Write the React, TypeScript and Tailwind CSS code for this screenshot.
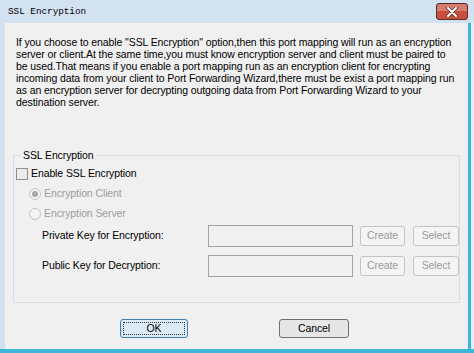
import React from "react";

const F = { fontFamily: '"Liberation Sans", Arial, sans-serif' };

function Radio({ checked, label }: { checked?: boolean; label: string }) {
  return (
    <div className="flex h-[20px] items-center pl-[13px]">
      <span className="flex h-[12px] w-[12px] items-center justify-center rounded-full border border-[#c4c4c4] bg-[#f4f4f4]">
        {checked && <span className="h-[6px] w-[6px] rounded-full bg-[#a8a8a8]" />}
      </span>
      <span className="ml-[3px] text-[#9d9d9d]">{label}</span>
    </div>
  );
}

function KeyRow({ label, className }: { label: string; className?: string }) {
  return (
    <div className={"flex h-[22px] items-center " + (className || "")}>
      <span className="w-[192px] pl-[26px] text-black">{label}</span>
      <div className="h-[22px] w-[145px] border border-[#a3a3a3] bg-[#f0f0f0]" />
      <button className="ml-[7px] h-[20px] w-[45px] rounded-[3px] border border-[#c2c5c7] bg-[#f4f4f4] text-[#9a9a9a]">
        Create
      </button>
      <button className="ml-[8px] h-[20px] w-[46px] rounded-[3px] border border-[#c2c5c7] bg-[#f4f4f4] text-[#9a9a9a]">
        Select
      </button>
    </div>
  );
}

export default function App() {
  return (
    <div className="flex h-[353px] w-[474px] flex-col bg-[#d4e2f0] text-[10.5px] tracking-[-0.1px]" style={F}>
      <div className="flex h-[23px] shrink-0 items-center bg-[#d3e2f1] pl-[8px] pr-[6px]">
        <span className="text-[9.3px] tracking-normal text-black" style={{ fontFamily: '"Liberation Mono", monospace' }}>
          SSL Encryption
        </span>
        <div className="flex-1" />
        <div className="flex h-[17px] w-[32px] items-center justify-center rounded-[3px] border border-[#5a2a26] bg-[#c9503f] shadow-[inset_0_7px_0_rgba(255,255,255,0.25)]">
          <svg width="12" height="10" viewBox="0 0 12 10">
            <path d="M2 1 L10 9 M10 1 L2 9" stroke="#5a2a26" strokeWidth="3.4" strokeLinecap="round" />
            <path d="M2 1 L10 9 M10 1 L2 9" stroke="#ffffff" strokeWidth="2" strokeLinecap="round" />
          </svg>
        </div>
      </div>
      <div className="flex min-h-0 flex-1">
        <div className="w-[5px] shrink-0 bg-[#d4e2f0]" />
        <div className="flex flex-1 flex-col bg-[#f0f0f0] pl-[11px] pt-[13px]">
          <p className="whitespace-nowrap leading-[12px] text-black">
            If you choose to enable "SSL Encryption" option,then this port mapping will run as an encryption
            <br />
            server or client.At the same time,you must know encryption server and client must be paired to
            <br />
            be used.That means if you enable a port mapping run as an encryption client for encrypting
            <br />
            incoming data from your client to Port Forwarding Wizard,there must be exist a port mapping run
            <br />
            as an encryption server for decrypting outgoing data from Port Forwarding Wizard to your
            <br />
            destination server.
          </p>
          <fieldset className="ml-[-3px] mt-[41px] h-[154px] w-[447px] shrink-0 border border-[#d5dfe5] pl-[2px] pt-[3px]">
            <legend className="ml-[5px] px-[2px] leading-[12px] text-black">SSL Encryption</legend>
            <div className="flex h-[20px] items-center">
              <span className="h-[12px] w-[12px] border border-[#8f8f8f] bg-[#ececec]" />
              <span className="ml-[3px] text-black">Enable SSL Encryption</span>
            </div>
            <Radio checked label="Encryption Client" />
            <Radio label="Encryption Server" />
            <KeyRow label="Private Key for Encryption:" className="mt-[1px]" />
            <KeyRow label="Public Key for Decryption:" className="mt-[8px]" />
          </fieldset>
          <div className="mt-[16px] flex shrink-0">
            <button className="ml-[104px] flex h-[19px] w-[68px] items-center justify-center rounded-[3px] border border-[#3c7fb1] bg-[#dcecf6] p-[2px] text-black">
              <span className="flex h-full w-full items-center justify-center border border-dotted border-[#333]">OK</span>
            </button>
            <button className="ml-[91px] h-[19px] w-[70px] rounded-[3px] border border-[#707070] bg-[#e6e6e6] text-black">
              Cancel
            </button>
          </div>
          <div className="flex-1" />
        </div>
        <div className="w-[2px] shrink-0 bg-[#e8eef4]" />
        <div className="w-[3px] shrink-0 bg-[#3eb6d8]" />
        <div className="w-[3px] shrink-0 bg-[#e9eef3]" />
      </div>
      <div className="h-[4px] shrink-0 bg-[#3eb6d8]" />
    </div>
  );
}
